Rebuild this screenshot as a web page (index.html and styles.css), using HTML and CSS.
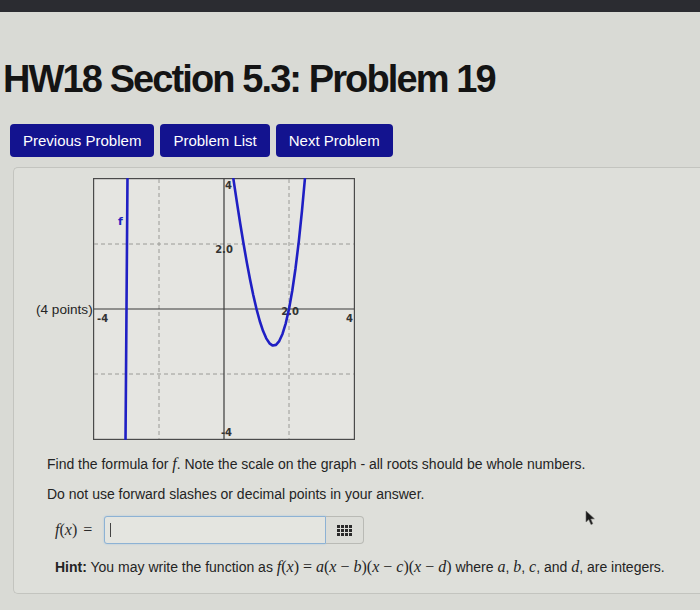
FILE: index.html
```html
<!DOCTYPE html>
<html>
<head>
<meta charset="utf-8">
<link rel="stylesheet" href="styles.css">
</head>
<body>
<div class="topbar"></div>
<h1 class="title">HW18 Section 5.3: Problem 19</h1>
<div class="nav">
  <a class="btn">Previous Problem</a>
  <a class="btn">Problem List</a>
  <a class="btn">Next Problem</a>
</div>
<div class="well">
  <div class="graph-row">
    <span class="pts">(4 points)</span>
    <svg class="graph" width="262" height="262" viewBox="0 0 262 262">
      <rect x="0.5" y="0.5" width="261" height="261" fill="#e5e5e1" stroke="#4a4a4a" stroke-width="1.4"/>
      <g stroke="#9a9a96" stroke-width="1" stroke-dasharray="4 3">
        <line x1="66" y1="1" x2="66" y2="261"/>
        <line x1="196" y1="1" x2="196" y2="261"/>
        <line x1="1" y1="66" x2="261" y2="66"/>
        <line x1="1" y1="196" x2="261" y2="196"/>
      </g>
      <g stroke="#3a3a3a" stroke-width="1.2">
        <line x1="131" y1="1" x2="131" y2="261"/>
        <line x1="1" y1="131" x2="261" y2="131"/>
      </g>
      <g class="lbl">
        <text x="132" y="11">4</text>
        <text x="131" y="75" text-anchor="middle">2.0</text>
        <text x="4" y="144">-4</text>
        <text x="253" y="144">4</text>
        <text x="197" y="137" text-anchor="middle">2.0</text>
        <text x="139" y="258" text-anchor="end">-4</text>
      </g>
      <text class="flbl" x="25" y="47">f</text>
      <g transform="translate(131 131) scale(32.5 -32.5)" fill="none" stroke="#1f1fc4" stroke-width="2.6" stroke-linejoin="round" stroke-linecap="round">
        <polyline vector-effect="non-scaling-stroke" points="-3.03,-4 -3,0 -2.97,4"/>
        <polyline vector-effect="non-scaling-stroke" points="0.29,4 0.3,3.927 0.4,3.264 0.5,2.625 0.6,2.016 0.7,1.443 0.8,0.912 0.9,0.429 1,0 1.1,-0.369 1.2,-0.672 1.3,-0.903 1.4,-1.056 1.5,-1.125 1.6,-1.104 1.7,-0.987 1.8,-0.768 1.9,-0.441 2,0 2.1,0.561 2.2,1.248 2.3,2.067 2.4,3.024 2.489,4"/>
      </g>
    </svg>
  </div>
  <p class="q">Find the formula for <i class="m">f</i>. Note the scale on the graph - all roots should be whole numbers.</p>
  <p class="q q2">Do not use forward slashes or decimal points in your answer.</p>
  <div class="answer">
    <span class="mlabel"><i>f</i>(<i>x</i>)<span class="op wide">=</span></span>
    <div class="input"><span class="caret"></span></div>
    <div class="editor">
      <svg width="15" height="11" viewBox="0 0 15 11">
        <g fill="#2a2a2a">
          <rect x="0" y="0" width="3" height="3"/><rect x="4" y="0" width="3" height="3"/><rect x="8" y="0" width="3" height="3"/><rect x="12" y="0" width="3" height="3"/>
          <rect x="0" y="4" width="3" height="3"/><rect x="4" y="4" width="3" height="3"/><rect x="8" y="4" width="3" height="3"/><rect x="12" y="4" width="3" height="3"/>
          <rect x="0" y="8" width="3" height="3"/><rect x="4" y="8" width="3" height="3"/><rect x="8" y="8" width="3" height="3"/><rect x="12" y="8" width="3" height="3"/>
        </g>
      </svg>
    </div>
  </div>
  <p class="hint"><b>Hint:</b> You may write the function as <span class="m"><i>f</i>(<i>x</i>)<span class="op">=</span><i>a</i>(<i>x</i><span class="op">−</span><i>b</i>)(<i>x</i><span class="op">−</span><i>c</i>)(<i>x</i><span class="op">−</span><i>d</i>)</span> where <i class="m">a</i>, <i class="m">b</i>, <i class="m">c</i>, and <i class="m">d</i>, are integers.</p>
</div>
<svg class="pointer" width="11" height="16" viewBox="0 0 11 16">
  <path d="M1 1 L1 12 L3.8 9.6 L6 14.6 L7.8 13.8 L5.7 9 L9.4 8.8 Z" fill="#1a1a1a" stroke="#6a6a66" stroke-width="0.6"/>
</svg>
</body>
</html>
```
FILE: styles.css
```css
body {
  margin: 0;
  width: 700px;
  height: 610px;
  overflow: hidden;
  position: relative;
  background: #d9dad5;
  font-family: "Liberation Sans", Arial, sans-serif;
  color: #242424;
}
.topbar {
  height: 12px;
  background: #2b2c31;
}
.title {
  margin: 45px 0 0 3px;
  font-size: 38px;
  line-height: 44px;
  font-weight: bold;
  letter-spacing: -1.9px;
  color: #141414;
}
.nav {
  display: flex;
  gap: 6px;
  margin: 23px 0 0 10px;
}
.btn {
  background: #13138f;
  color: #ffffff;
  font-size: 15px;
  line-height: 17px;
  padding: 8px 13px;
  border-radius: 4px;
}
.well {
  margin: 10px 0 0 13px;
  background: #dedfda;
  border: 1px solid #c3c4bf;
  border-right: none;
  border-radius: 5px 0 0 5px;
  padding: 10px 0 17px 22px;
}
.graph-row {
  display: flex;
  align-items: center;
}
.pts {
  font-size: 13.6px;
}
.graph {
  display: block;
}
.lbl text {
  font-family: "DejaVu Sans", sans-serif;
  font-weight: bold;
  font-size: 10px;
  fill: #333333;
}
.flbl {
  font-family: "DejaVu Sans", sans-serif;
  font-weight: bold;
  font-size: 11px;
  fill: #2020c0;
}
.q {
  margin: 15px 0 0 11px;
  font-size: 14px;
  line-height: 18px;
}
.q2 {
  margin-top: 12px;
}
.m, .m i, .mlabel {
  font-family: "Liberation Serif", "Times New Roman", serif;
  font-size: 16px;
}
.op {
  margin: 0 4px;
}
.op.wide {
  margin: 0 0 0 6px;
}
.answer {
  display: flex;
  align-items: center;
  margin: 13px 0 0 19px;
}
.mlabel {
  margin-right: 12px;
  color: #2a2a2a;
}
.input {
  width: 215px;
  height: 26px;
  border: 1px solid #8db2d4;
  box-shadow: 0 0 2px #a9c6e0;
  border-radius: 3px 0 0 3px;
  background: #e4e5e0;
  display: flex;
  align-items: center;
  padding-left: 5px;
  box-sizing: content-box;
}
.caret {
  width: 1px;
  height: 14px;
  background: #444444;
}
.editor {
  width: 37px;
  height: 26px;
  border: 1px solid #b9bab5;
  border-left: none;
  border-radius: 0 4px 4px 0;
  background: #dcddd8;
  display: flex;
  align-items: center;
  justify-content: center;
}
.hint {
  margin: 14px 0 0 19px;
  font-size: 14px;
  line-height: 18px;
}
.hint b {
  font-weight: bold;
}
.pointer {
  position: absolute;
  left: 585px;
  top: 510px;
}
```
